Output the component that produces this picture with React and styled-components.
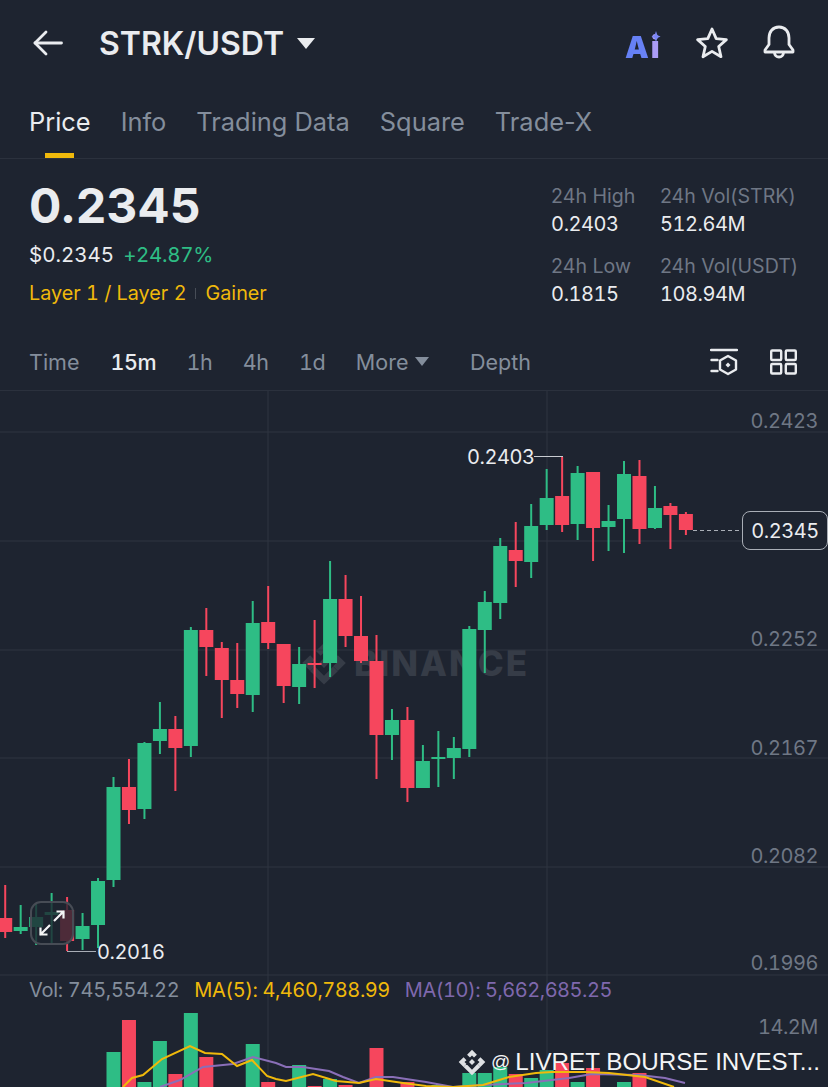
import React from 'react';
import styled, { createGlobalStyle, css } from 'styled-components';

const GlobalStyle = createGlobalStyle`
    html, body {
        margin: 0;
        padding: 0;
        background: #1e2430;
    }
    * {
        box-sizing: border-box;
    }
`;

const UP = '#2ebd85';
const DOWN = '#f6465d';

const figures = css`
    font-variant-numeric: tabular-nums;
    letter-spacing: -0.45px;
`;

// k, direction, body top, body bottom, wick top, wick bottom (page y)
const CANDLES = [
    [-7, 'd', 918, 932, 885, 938],
    [-6, 'u', 927, 931, 905, 934],
    [-5, 'u', 917, 927, 903, 945],
    [-4, 'u', 912, 915, 893, 945],
    [-3, 'd', 910, 941, 897, 951],
    [-2, 'u', 926, 939, 913, 950],
    [-1, 'u', 881, 925, 878, 948],
    [0, 'u', 787, 880, 777, 887],
    [1, 'd', 787, 810, 759, 824],
    [2, 'u', 743, 809, 742, 819],
    [3, 'u', 729, 741, 702, 754],
    [4, 'd', 729, 748, 716, 791],
    [5, 'u', 630, 746, 627, 757],
    [6, 'd', 630, 647, 608, 676],
    [7, 'd', 648, 680, 642, 718],
    [8, 'd', 680, 694, 643, 708],
    [9, 'u', 623, 695, 601, 712],
    [10, 'd', 622, 643, 586, 649],
    [11, 'd', 644, 686, 644, 703],
    [12, 'u', 664, 687, 647, 704],
    [13, 'd', 663, 665, 620, 688],
    [14, 'u', 599, 663, 561, 677],
    [15, 'd', 599, 636, 575, 647],
    [16, 'd', 636, 661, 596, 663],
    [17, 'd', 661, 735, 635, 779],
    [18, 'u', 720, 735, 709, 760],
    [19, 'd', 720, 788, 707, 802],
    [20, 'u', 761, 788, 745, 788],
    [21, 'u', 757, 759, 731, 787],
    [22, 'u', 748, 758, 737, 779],
    [23, 'u', 629, 749, 626, 757],
    [24, 'u', 602, 630, 591, 673],
    [25, 'u', 546, 603, 538, 619],
    [26, 'd', 550, 561, 522, 587],
    [27, 'u', 526, 562, 504, 578],
    [28, 'u', 498, 525, 469, 530],
    [29, 'd', 496, 525, 457, 532],
    [30, 'u', 473, 524, 466, 540],
    [31, 'd', 472, 528, 472, 561],
    [32, 'u', 521, 527, 505, 551],
    [33, 'u', 474, 519, 461, 553],
    [34, 'd', 476, 529, 460, 544],
    [35, 'u', 508, 528, 486, 529],
    [36, 'd', 506, 515, 503, 549],
    [37, 'd', 514, 530, 512, 535],
];

// k, direction, bar top (page y)
const VOLUMES = [
    [0, 'u', 1052], [1, 'd', 1020], [2, 'u', 1082], [3, 'u', 1041], [4, 'd', 1074],
    [5, 'u', 1013], [6, 'd', 1057], [9, 'u', 1044], [10, 'd', 1082], [12, 'u', 1065],
    [13, 'd', 1086], [14, 'u', 1079], [15, 'd', 1085], [17, 'd', 1048], [19, 'd', 1082],
    [21, 'u', 1085], [23, 'u', 1073], [24, 'u', 1073], [25, 'u', 1067], [26, 'd', 1074],
    [27, 'u', 1078], [28, 'u', 1070], [29, 'd', 1063], [30, 'u', 1082], [31, 'd', 1068],
    [33, 'u', 1082], [34, 'd', 1073],
];

const MA5 = '123,1087 132,1078 143,1075 162,1059 190,1046 205,1053 222,1054 237,1066 252,1060 267,1076 276,1079 286,1081 313,1074 336,1081 359,1083 376,1079 403,1083 426,1086 453,1087 483,1085 509,1077 536,1073 552,1072 585,1072 609,1073 645,1077 674,1087';
const MA10 = '160,1087 180,1080 203,1067 233,1064 253,1057 276,1063 286,1067 303,1067 329,1071 343,1077 359,1083 376,1077 393,1077 426,1082 453,1087 483,1085 526,1083 552,1080 569,1078 592,1074 639,1075 665,1078 685,1083';

const candleX = (k) => 113.5 + k * 15.47;

const Page = styled.div`
    width: 828px;
    height: 1087px;
    overflow: hidden;
    background: #1e2430;
    color: #eaecef;
    font-family: Inter, "Noto Sans", sans-serif;
`;

const Header = styled.header`
    display: flex;
    align-items: center;
    height: 86px;
    padding: 0 32px 0 33px;
`;

const BackButton = styled.div`
    display: flex;
    width: 66px;
`;

const Title = styled.h1`
    margin: 0;
    font-size: 32px;
    font-weight: 600;
    color: #eaecef;
`;

const TitleCaret = styled.div`
    width: 0;
    height: 0;
    margin-left: 13px;
    border-left: 9px solid transparent;
    border-right: 9px solid transparent;
    border-top: 11px solid #eaecef;
`;

const HeaderIcons = styled.div`
    display: flex;
    align-items: center;
    gap: 33px;
    margin-left: auto;
`;

const AiBadge = styled.div`
    position: relative;
    width: 36px;
    height: 34px;
    margin-right: 1px;
`;

const AiText = styled.span`
    position: absolute;
    left: 0;
    bottom: -5px;
    font-size: 30px;
    font-weight: 900;
    letter-spacing: 2px;
    background: linear-gradient(90deg, #6480f5 0%, #6a82f5 70%, #ab9cf6 70%, #ab9cf6 100%);
    -webkit-background-clip: text;
    background-clip: text;
    color: transparent;
`;

const AiSpark = styled.svg`
    position: absolute;
    right: 0;
    top: 5px;
`;

const Tabs = styled.nav`
    display: flex;
    align-items: center;
    gap: 30px;
    height: 73px;
    padding: 0 29px;
    border-bottom: 1px solid #2b313d;
`;

const Tab = styled.div`
    position: relative;
    font-size: 25.4px;
    line-height: 72px;
    color: ${(props) => (props.$active ? '#eaecef' : '#848e9c')};

    ${(props) => props.$active && `
        &::after {
            content: "";
            position: absolute;
            left: 16px;
            bottom: 0;
            width: 29px;
            height: 5px;
            background: #f0b90b;
        }
    `}
`;

const Stats = styled.section`
    display: flex;
    justify-content: space-between;
    height: 174px;
    padding: 0 30px 0 29px;
`;

const PriceColumn = styled.div`
    padding-top: 18px;
`;

const BigPrice = styled.div`
    font-size: 48px;
    line-height: 58px;
    font-weight: 700;
    color: #eaecef;
`;

const SubPrice = styled.div`
    display: flex;
    gap: 9px;
    margin-top: 6px;
    font-size: 20.5px;
    line-height: 28px;
    font-variant-numeric: tabular-nums;
`;

const Change = styled.span`
    letter-spacing: -0.3px;
    color: ${UP};
`;

const TagRow = styled.div`
    display: flex;
    align-items: center;
    margin-top: 10px;
    font-size: 19.8px;
    line-height: 28px;
    font-variant-numeric: tabular-nums;
    color: #f0b90b;
`;

const TagDivider = styled.i`
    width: 1px;
    height: 11px;
    margin: 0 9px;
    background: #474d57;
`;

const MarketGrid = styled.div`
    display: grid;
    grid-template-columns: auto auto;
    column-gap: 24.5px;
    row-gap: 15px;
    align-content: start;
    padding-top: 24px;
`;

const MarketCell = styled.div`
    line-height: 27px;
`;

const MarketLabel = styled.div`
    font-size: 19.6px;
    color: #6f7785;
`;

const MarketValue = styled.div`
    ${figures}
    padding-top: 1px;
    font-size: 20px;
    color: #eaecef;
`;

const TimeBar = styled.div`
    display: flex;
    align-items: center;
    gap: 30.5px;
    height: 58px;
    padding: 0 31px 0 29px;
    border-bottom: 1px solid #2b313d;
    font-size: 21.5px;
`;

const TimeItem = styled.div`
    display: flex;
    align-items: center;
    gap: 7px;
    color: ${(props) => (props.$active ? '#eaecef' : '#848e9c')};
    font-weight: ${(props) => (props.$active ? 500 : 400)};
    margin-left: ${(props) => props.$offset || 0}px;
    ${(props) => props.$figures && figures}
`;

const SmallCaret = styled.i`
    width: 0;
    height: 0;
    border-left: 7.5px solid transparent;
    border-right: 7.5px solid transparent;
    border-top: 9px solid #848e9c;
`;

const TimeIcons = styled.div`
    display: flex;
    align-items: center;
    gap: 32px;
    margin-left: auto;
`;

const ChartPane = styled.section`
    position: relative;
    height: 584px;
`;

const VolumePane = styled.section`
    position: relative;
    height: 112px;
`;

const Drawing = styled.svg`
    position: absolute;
    left: 0;
    top: 0;
    display: block;
`;

const Watermark = styled.div`
    position: absolute;
    left: 301px;
    top: 249px;
    display: flex;
    align-items: center;
    gap: 7px;
    font-size: 35px;
    font-weight: 800;
    letter-spacing: 2px;
    color: #363c47;
`;

const AxisLabel = styled.span`
    ${figures}
    position: absolute;
    right: 10px;
    top: ${(props) => props.$y}px;
    font-size: 20px;
    line-height: 24px;
    color: #6f7785;
`;

const PriceMark = styled.span`
    ${figures}
    position: absolute;
    left: ${(props) => props.$x}px;
    top: ${(props) => props.$y}px;
    font-size: 20px;
    line-height: 24px;
    color: #eaecef;
`;

const LastPriceTag = styled.div`
    ${figures}
    position: absolute;
    right: 0;
    top: 120px;
    display: flex;
    align-items: center;
    justify-content: center;
    width: 86px;
    height: 39px;
    border: 1px solid #a9aeb6;
    border-radius: 8px;
    background: #1e2430;
    font-size: 20px;
    color: #eaecef;
`;

const ExpandButton = styled.div`
    position: absolute;
    left: 30px;
    top: 510px;
    display: flex;
    align-items: center;
    justify-content: center;
    width: 44px;
    height: 44px;
    border: 2px solid #474c55;
    border-radius: 11px;
    background: rgba(30, 36, 48, 0.78);
`;

const Legend = styled.div`
    ${figures}
    position: relative;
    display: flex;
    gap: 15px;
    padding: 2px 0 0 29px;
    font-size: 20px;
    line-height: 26px;
`;

const LegendItem = styled.span`
    color: ${(props) => props.$color};
    letter-spacing: ${(props) => props.$spacing || '-0.45px'};
`;

const Credit = styled.div`
    position: absolute;
    left: 458px;
    bottom: 11px;
    display: flex;
    align-items: center;
    font-family: "Liberation Sans", Arial, sans-serif;
    font-size: 24.2px;
    line-height: 28px;
    color: #f4f5f6;
    white-space: nowrap;
`;

const CreditAt = styled.span`
    margin: 0 5px 0 5px;
    font-size: 19px;
`;

const BinanceMark = ({ size, color }) => (
    <svg width={size} height={size} viewBox="0 0 32 32" fill={color}>
        <path d="M16 2l5.6 5.6-3.3 3.3-2.3-2.3-2.3 2.3-3.3-3.3z" />
        <path d="M6.4 10.6L9.7 14l-2.3 2 2.3 2.3-3.3 3.3L.8 16z" />
        <path d="M25.6 10.6l5.6 5.4-5.6 5.6-3.3-3.3 2.3-2.3-2.3-2z" />
        <path d="M16 12.6l3.4 3.4-3.4 3.4-3.4-3.4z" />
        <path d="M9.7 18.3l-.1.1L16 24.8l6.3-6.4 3.3 3.3L16 31l-9.6-9.3z" />
    </svg>
);

const BackIcon = () => (
    <svg width="30" height="26" viewBox="0 0 30 26" fill="none" stroke="#eaecef" strokeWidth="2.8" strokeLinecap="round" strokeLinejoin="round">
        <path d="M28.5 13H2" />
        <path d="M13 2L2 13l11 11" />
    </svg>
);

const StarIcon = () => (
    <svg width="34" height="34" viewBox="0 0 34 34" fill="none" stroke="#eaecef" strokeWidth="2.8" strokeLinejoin="round">
        <path d="M17 3l4.2 9.6 10.2 1-7.7 6.9 2.3 10.2L17 25.4l-9 5.3 2.3-10.2-7.7-6.9 10.2-1z" />
    </svg>
);

const BellIcon = () => (
    <svg width="34" height="36" viewBox="0 0 34 36" fill="none" stroke="#eaecef" strokeWidth="2.8" strokeLinecap="round" strokeLinejoin="round">
        <path d="M17 2c-6.4 0-10 5-10 11v6.5L3 25v2h28v-2l-4-5.500V13c0-6-3.600-11-10-11z" />
        <path d="M12.500 27.500a4.500 4.500 0 0 0 9 0" />
    </svg>
);

const IndicatorIcon = () => (
    <svg width="28" height="28" viewBox="0 0 28 28" fill="none" stroke="#eaecef" strokeWidth="2.400" strokeLinecap="round">
        <path d="M1 2h26" />
        <path d="M1.500 12h6M1.500 23h6" />
        <path d="M18 8l8 4.500v9L18 26l-8-4.500v-9z" strokeLinejoin="round" />
        <path d="M18 14.500l2.500 2.500-2.500 2.500-2.500-2.500z" fill="#eaecef" stroke="none" />
    </svg>
);

const GridIcon = () => (
    <svg width="27" height="26" viewBox="0 0 27 26" fill="none" stroke="#eaecef" strokeWidth="2.400">
        <rect x="1.200" y="1.500" width="10" height="9.500" rx="1" />
        <rect x="15.800" y="1.500" width="10" height="9.500" rx="1" />
        <rect x="1.200" y="15" width="10" height="9.500" rx="1" />
        <rect x="15.800" y="15" width="10" height="9.500" rx="1" />
    </svg>
);

const ExpandIcon = () => (
    <svg width="30" height="30" viewBox="0 0 30 30" fill="none" stroke="#f4f5f6" strokeWidth="2.2">
        <path d="M3 27L13 17M3.500 19.500V26.500H10.500" />
        <path d="M17 13L27 3M19.500 3.500H26.500V10.500" />
    </svg>
);

const Grid = ({ lines }) => (
    <>
        {lines.map((y) => (
            <line key={y} x1="0" x2="828" y1={y} y2={y} stroke="#2f3540" strokeWidth="1" />
        ))}
        <line x1="268" x2="268" y1="0" y2="1087" stroke="#2f3540" strokeWidth="1" />
        <line x1="547" x2="547" y1="0" y2="1087" stroke="#2f3540" strokeWidth="1" />
    </>
);

const Candle = ({ k, dir, top, bottom, high, low }) => {
    const x = candleX(k);
    const color = dir === 'u' ? UP : DOWN;
    return (
        <g fill={color}>
            <rect x={x - 1} y={high} width="2" height={low - high} />
            <rect x={x - 7} y={top} width="14" height={bottom - top} />
        </g>
    );
};

const App = () => {
    return (
        <Page>
            <GlobalStyle />
            <Header>
                <BackButton><BackIcon /></BackButton>
                <Title>STRK/USDT</Title>
                <TitleCaret />
                <HeaderIcons>
                    <AiBadge>
                        <AiText>Ai</AiText>
                        <AiSpark width="10" height="11" viewBox="0 0 10 12">
                            <path d="M5 0l1.500 4.500L10 6 6.500 7.500 5 12 3.500 7.500 0 6l3.500-1.500z" fill="#7a86f5" />
                        </AiSpark>
                    </AiBadge>
                    <StarIcon />
                    <BellIcon />
                </HeaderIcons>
            </Header>

            <Tabs>
                <Tab $active>Price</Tab>
                <Tab>Info</Tab>
                <Tab>Trading Data</Tab>
                <Tab>Square</Tab>
                <Tab>Trade-X</Tab>
            </Tabs>

            <Stats>
                <PriceColumn>
                    <BigPrice>0.2345</BigPrice>
                    <SubPrice>
                        <span>$0.2345</span>
                        <Change>+24.87%</Change>
                    </SubPrice>
                    <TagRow>
                        <span>Layer 1 / Layer 2</span>
                        <TagDivider />
                        <span>Gainer</span>
                    </TagRow>
                </PriceColumn>
                <MarketGrid>
                    <MarketCell>
                        <MarketLabel>24h High</MarketLabel>
                        <MarketValue>0.2403</MarketValue>
                    </MarketCell>
                    <MarketCell>
                        <MarketLabel>24h Vol(STRK)</MarketLabel>
                        <MarketValue>512.64M</MarketValue>
                    </MarketCell>
                    <MarketCell>
                        <MarketLabel>24h Low</MarketLabel>
                        <MarketValue>0.1815</MarketValue>
                    </MarketCell>
                    <MarketCell>
                        <MarketLabel>24h Vol(USDT)</MarketLabel>
                        <MarketValue>108.94M</MarketValue>
                    </MarketCell>
                </MarketGrid>
            </Stats>

            <TimeBar>
                <TimeItem>Time</TimeItem>
                <TimeItem $active $figures $offset={0.5}>15m</TimeItem>
                <TimeItem $figures>1h</TimeItem>
                <TimeItem $figures>4h</TimeItem>
                <TimeItem $figures>1d</TimeItem>
                <TimeItem>More<SmallCaret /></TimeItem>
                <TimeItem $offset={10}>Depth</TimeItem>
                <TimeIcons>
                    <IndicatorIcon />
                    <GridIcon />
                </TimeIcons>
            </TimeBar>

            <ChartPane>
                <Watermark>
                    <BinanceMark size={46} color="#363c47" />
                    <span>BINANCE</span>
                </Watermark>
                <Drawing width="828" height="584" viewBox="0 391 828 584">
                    <Grid lines={[432, 541, 650, 758, 867, 975]} />
                    {CANDLES.map(([k, dir, top, bottom, high, low]) => (
                        <Candle key={k} k={k} dir={dir} top={top} bottom={bottom} high={high} low={low} />
                    ))}
                    <path d="M534 456.500H563" stroke="#c9ccd1" strokeWidth="1" />
                    <path d="M67 951.500H96" stroke="#a9aeb6" strokeWidth="1" />
                    <path d="M693 530.500H742" stroke="#a9aeb6" strokeWidth="1" strokeDasharray="4 3" />
                </Drawing>
                <AxisLabel $y={18}>0.2423</AxisLabel>
                <AxisLabel $y={236}>0.2252</AxisLabel>
                <AxisLabel $y={345}>0.2167</AxisLabel>
                <AxisLabel $y={453}>0.2082</AxisLabel>
                <AxisLabel $y={560}>0.1996</AxisLabel>
                <PriceMark $x={467} $y={54}>0.2403</PriceMark>
                <PriceMark $x={97} $y={549}>0.2016</PriceMark>
                <LastPriceTag>0.2345</LastPriceTag>
                <ExpandButton><ExpandIcon /></ExpandButton>
            </ChartPane>

            <VolumePane>
                <Drawing width="828" height="112" viewBox="0 975 828 112">
                    <Grid lines={[975]} />
                    {VOLUMES.map(([k, dir, top]) => (
                        <rect key={k} x={candleX(k) - 7} y={top} width="14" height={1087 - top} fill={dir === 'u' ? UP : DOWN} />
                    ))}
                    <polyline points={MA10} fill="none" stroke="#8a6fb8" strokeWidth="2" />
                    <polyline points={MA5} fill="none" stroke="#f0b90b" strokeWidth="2" />
                </Drawing>
                <Legend>
                    <LegendItem $color="#848e9c" $spacing="-0.3px">Vol: 745,554.22</LegendItem>
                    <LegendItem $color="#f0b90b">MA(5): 4,460,788.99</LegendItem>
                    <LegendItem $color="#7f68ad" $spacing="-0.5px">MA(10): 5,662,685.25</LegendItem>
                </Legend>
                <AxisLabel $y={40}>14.2M</AxisLabel>
                <Credit>
                    <BinanceMark size={28} color="#dfe1e4" />
                    <CreditAt>@</CreditAt>
                    <span>LIVRET BOURSE INVEST...</span>
                </Credit>
            </VolumePane>
        </Page>
    );
};

export default App;
